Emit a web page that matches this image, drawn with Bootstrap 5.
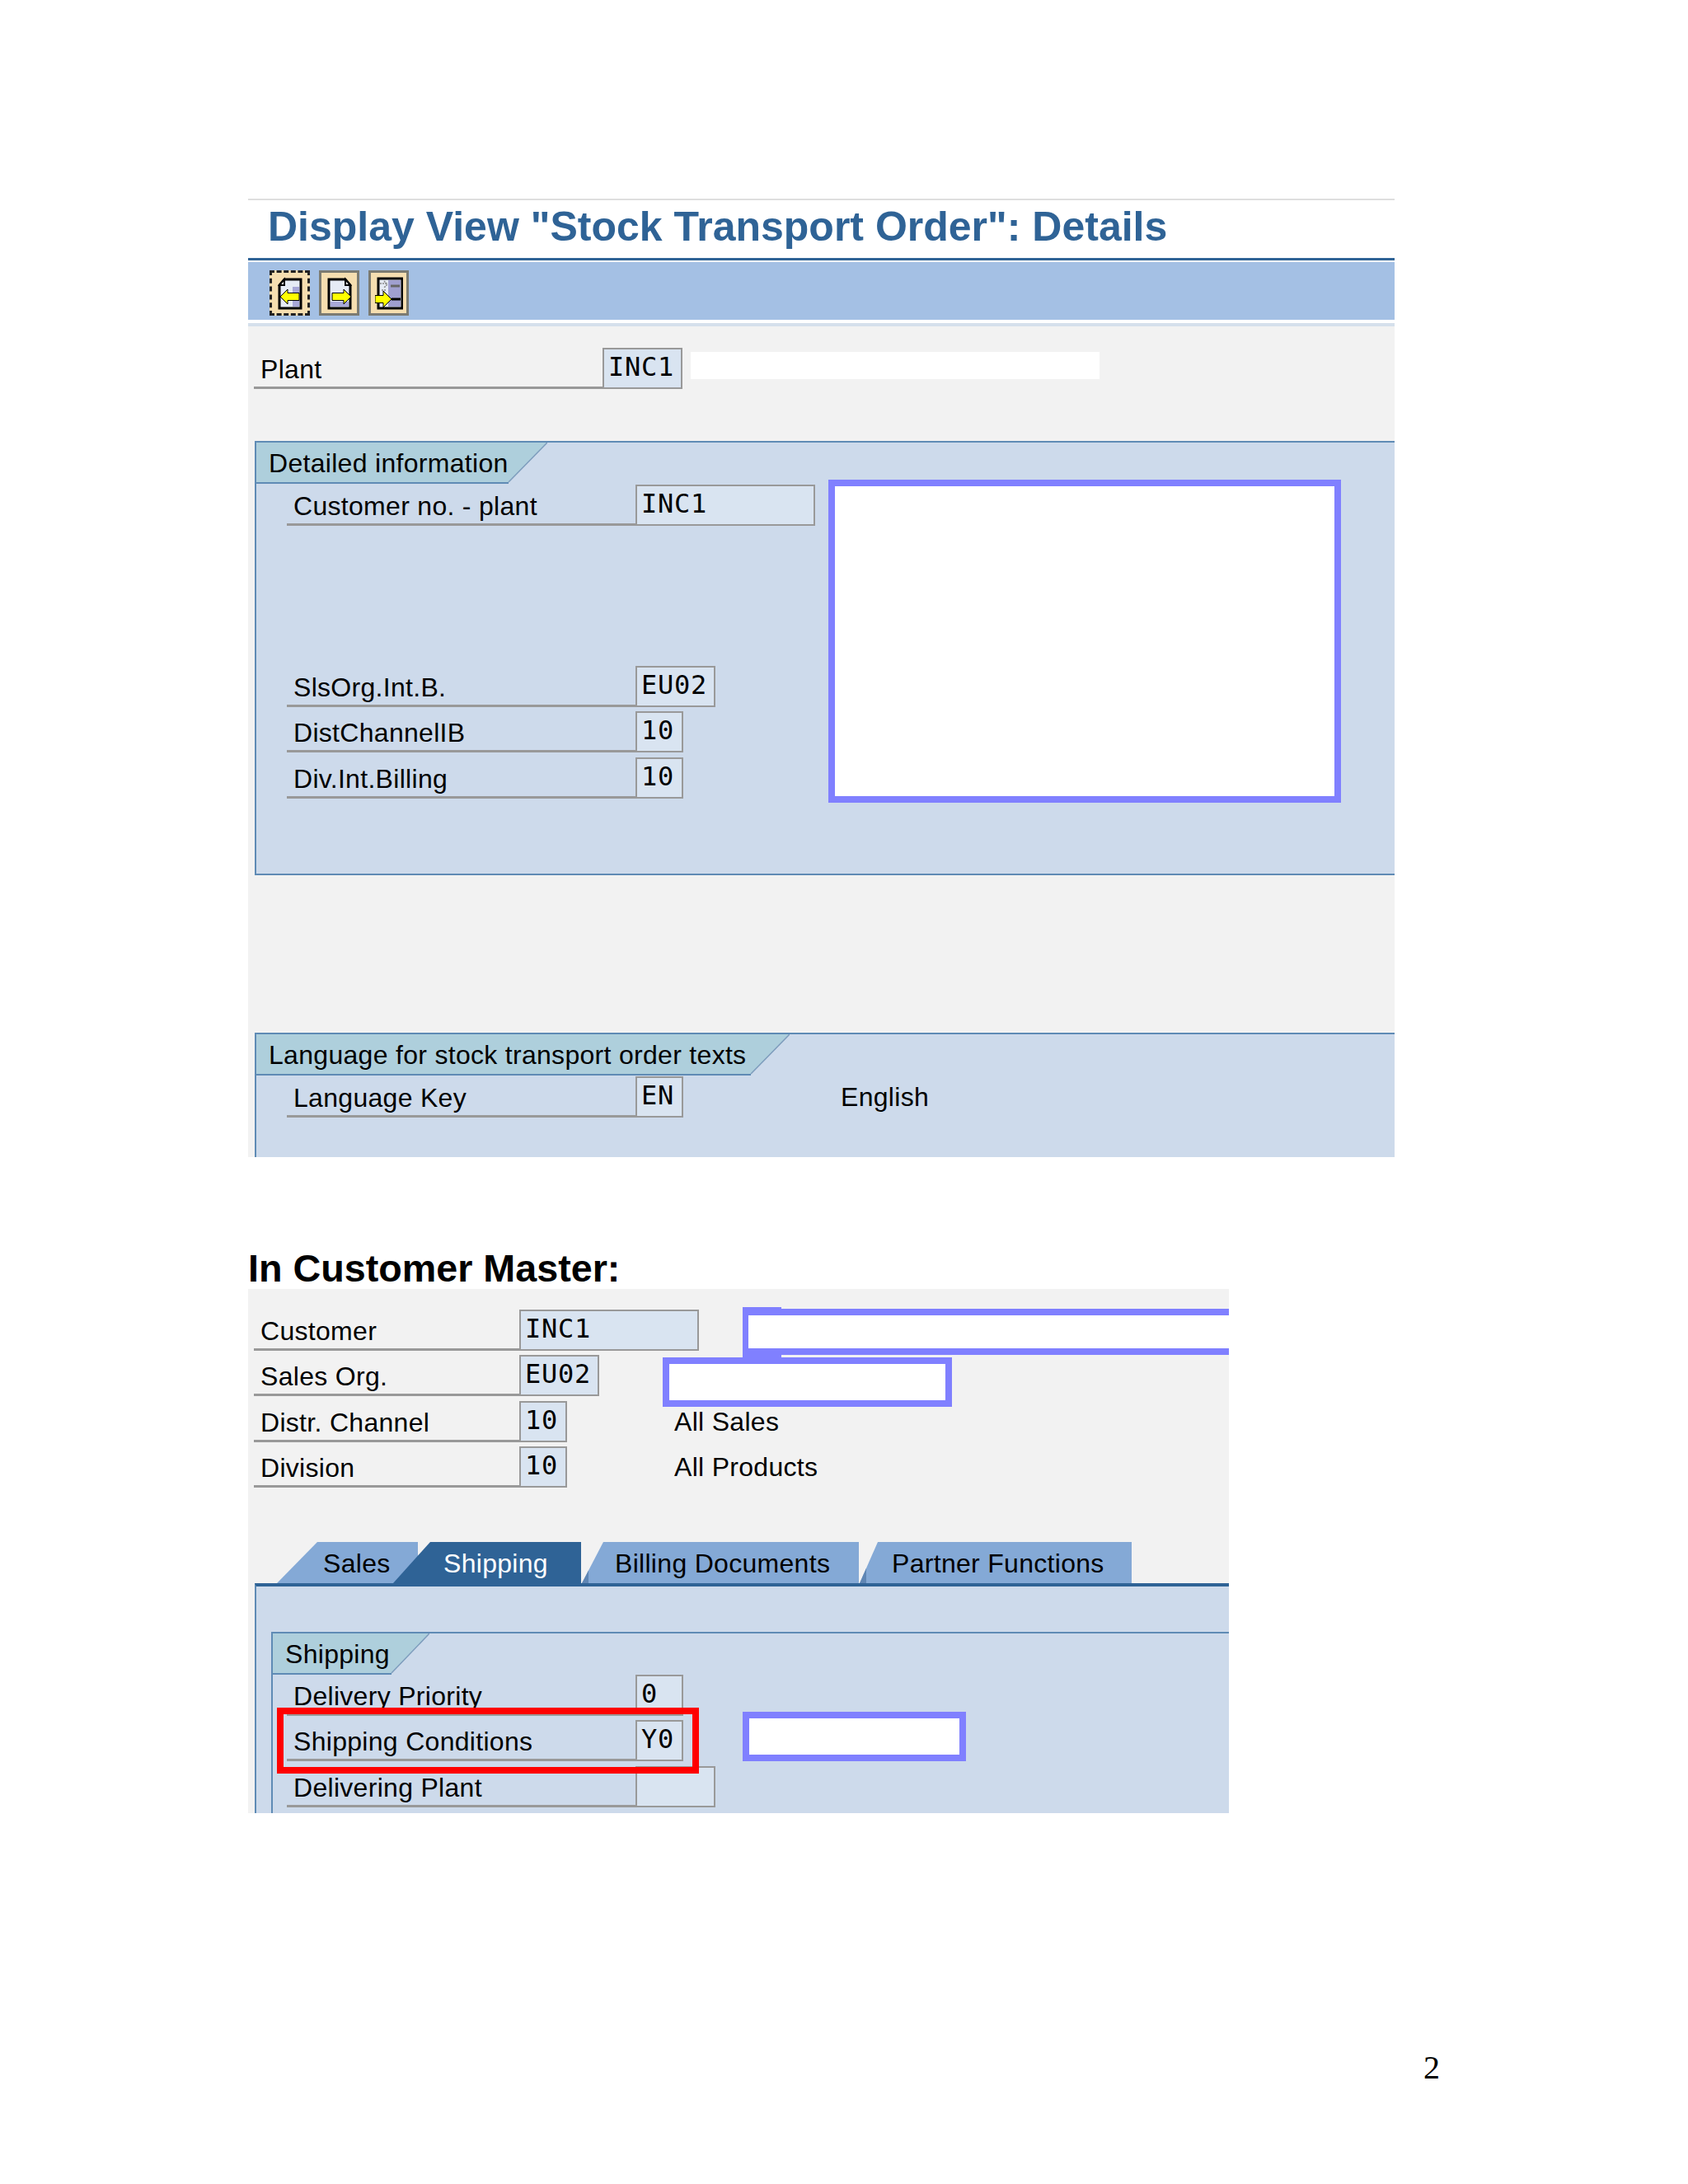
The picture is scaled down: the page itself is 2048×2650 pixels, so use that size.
<!DOCTYPE html>
<html lang="en">
<head>
<meta charset="utf-8">
<title>Stock Transport Order</title>
<link href="https://cdn.jsdelivr.net/npm/bootstrap@5.3.0/dist/css/bootstrap.min.css" rel="stylesheet">
<style>
body{background:#fff;font-family:"Liberation Sans",Arial,sans-serif;color:#000;margin:0;height:2650px;overflow:hidden}
.shot-a{position:relative;margin-left:301px;margin-top:241px;width:1391px;height:1163px;background:#f2f2f2;overflow:hidden}
.title-band{height:75px;background:#fff;border-top:2px solid #dedede;border-bottom:3px solid #2f6396;padding-left:24px;color:#2f6396;font-weight:700;font-size:50px;line-height:64px;white-space:nowrap}
.gap-band{height:2px;background:#fff}
.tool-band{height:70px;background:#a4c0e4;padding:10px 0 0 26px;gap:11px}
.tool-foot{height:8px;background:linear-gradient(#fff 0 50%,#d5e0ec 50%)}
.tbtn{width:49px;height:55px;background:#f5deb0;border:3px solid #7b7b72;display:flex;align-items:center;justify-content:center}
.tbtn-focus{outline:3px dashed #222;outline-offset:-3px;border-color:transparent}
.tbtn svg{width:34px;height:40px;display:block}
.sap-row{display:flex;height:50px;font-size:32px;line-height:40px}
.sap-row+.sap-row{margin-top:5.33px}
.lbl{flex:none;width:423px;border-bottom:3px solid #999;padding:6px 0 0 8px;white-space:nowrap;letter-spacing:.3px}
.lbl-short{width:322px}
.fld{flex:none;border:2px solid #999;background:#d9e4f1;font-family:"DejaVu Sans Mono",monospace;font-size:32px;line-height:38px;letter-spacing:.7px;padding:2px 0 0 5px;white-space:nowrap;overflow:hidden}
.w-s{width:58px}.w-m{width:97px}.w-l{width:218px}
.desc{white-space:nowrap;letter-spacing:.3px;padding-top:5px}
.plant-row{margin:26px 0 0 7px}
.plant-blank{flex:none;width:496px;height:33px;background:#fff;margin:5px 0 0 10px}
.grp{position:relative;margin-left:8px;background:#cddaeb;border-top:2px solid #5f8bb5;border-left:2px solid #5f8bb5}
.grp-a{margin-top:63px;height:527px;border-bottom:2px solid #5f8bb5}
.grp-b{margin-top:191px;height:151px}
.grp-c{margin:55px 0 0 18px;height:224px}
.grp-head{position:relative;height:50px;font-size:32px;line-height:42px;padding:4px 0 0 15px;white-space:nowrap;letter-spacing:.3px}
.grp-head svg{position:absolute;left:0;top:0;height:50px}
.grp-head span{position:relative}
.grp-rows{margin:1px 0 0 37px}
.grp-rows-c{margin:0 0 0 17px}
.spaced{margin-top:170px!important}
.english{margin-left:191px}
.red-out{position:absolute;background:#fff;border:8px solid #8080ff}
.out-a{left:704px;top:341px;width:622px;height:392px}
.shot-b{position:relative;margin-top:2px;margin-left:301px;width:1190px;height:636px;background:#f2f2f2;overflow:hidden}
.cust-head{margin:112px 0 0 301px;font-size:46.7px;line-height:46px;font-weight:700;white-space:nowrap}
.cust-rows{padding:25px 0 0 7px}
.all-txt{margin-left:130px}
.tabs{display:flex;margin:66px 0 0 35px;height:50px;font-size:32px;line-height:42px;letter-spacing:.3px;white-space:nowrap}
.stab{position:relative;background:#84a9d6;padding-top:5px}
.stab-1{width:171px;padding-left:56px;clip-path:polygon(49px 0,100% 0,100% 100%,0 100%)}
.stab-2{width:228px;margin-left:-30px;padding-left:61px;color:#fff;background:#2f6396;clip-path:polygon(45px 0,100% 0,100% 100%,0 100%)}
.stab-3{width:336px;margin-left:1px;padding-left:40px;clip-path:polygon(26px 0,100% 0,100% 100%,0 100%)}
.stab-4{width:330px;margin-left:1px;padding-left:39px;clip-path:polygon(22px 0,100% 0,100% 100%,0 100%)}
.stab-3::before,.stab-4::before{content:"";position:absolute;left:0;bottom:0;width:8px;height:20px;background:#5f86b4}
.tab-pane{margin-left:8px;height:279px;background:#cddaeb;border-top:4px solid #2f6396;border-left:2px solid #5f8bb5;overflow:hidden}
.out-b{left:600px;top:24px;width:640px;height:56px;border-width:8px 0 8px 7px}
.notch{position:absolute;left:600px;top:22px;width:47px;height:67px;background:#8080ff}
.out-c{left:503px;top:83px;width:351px;height:60px}
.out-d{left:600px;top:513px;width:271px;height:60px}
.red-box{position:absolute;left:35px;top:508px;width:512px;height:80px;border:8px solid #f00}
.page-no{margin:286px 0 0 1727px;font-family:"Liberation Serif","Times New Roman",serif;font-size:40px;line-height:46px}
</style>
</head>
<body>
<div class="shot-a">
  <div class="title-band">Display View "Stock Transport Order": Details</div>
  <div class="gap-band"></div>
  <div class="tool-band d-flex">
    <div class="tbtn tbtn-focus"><svg viewBox="0 0 34 40"><path d="M10 3H30V38H4V10Z" fill="#e6ebf5" stroke="#000" stroke-width="3"/><path d="M10 3V10H4Z" fill="#fff" stroke="#000" stroke-width="2"/><rect x="20" y="12" width="8" height="24" fill="#a8a8d8"/><path d="M5 24 14 15V19.500H28V28.500H14V33Z" fill="#ff0" stroke="#000" stroke-width="1"/></svg></div>
    <div class="tbtn"><svg viewBox="0 0 34 40"><path d="M4 3H24L30 10V38H4Z" fill="#e6ebf5" stroke="#000" stroke-width="3"/><path d="M24 3V10H30Z" fill="#fff" stroke="#000" stroke-width="2"/><rect x="6" y="30" width="22" height="6" fill="#a8a8d8"/><path d="M31 24 22 15V19.500H8V28.500H22V33Z" fill="#ff0" stroke="#000" stroke-width="1"/></svg></div>
    <div class="tbtn"><svg viewBox="0 0 34 40"><rect x="4" y="2" width="29" height="36" fill="#e6ebf5" stroke="#000" stroke-width="3"/><rect x="16" y="4" width="15" height="32" fill="#a0a0d0"/><path d="M19 11H30" stroke="#666" stroke-width="3"/><path d="M20 27H31" stroke="#000" stroke-width="3"/><path d="M6 8H14M11 5 15 9 11 13M8 16H13" fill="none" stroke="#888" stroke-width="1.5" stroke-dasharray="2 1"/><path d="M0 22.500H10V17L20 27 10 37V31.500H0Z" fill="#ff0" stroke="#000" stroke-width="1"/></svg></div>
  </div>
  <div class="tool-foot"></div>
  <div class="sap-row plant-row">
    <div class="lbl">Plant</div>
    <div class="fld w-m">INC1</div>
    <div class="plant-blank"></div>
  </div>
  <div class="grp grp-a">
    <div class="grp-head"><svg width="353" height="50" viewBox="0 0 353 50"><path d="M0 0H353L306 48H0Z" fill="#aecfdc"/><path d="M353 0 306 48" stroke="#7d9cbc" stroke-width="1.5"/><path d="M0 49H306" stroke="#5f8bb5" stroke-width="2"/></svg><span>Detailed information</span></div>
    <div class="grp-rows">
      <div class="sap-row"><div class="lbl">Customer no. - plant</div><div class="fld w-l">INC1</div></div>
      <div class="sap-row spaced"><div class="lbl">SlsOrg.Int.B.</div><div class="fld w-m">EU02</div></div>
      <div class="sap-row"><div class="lbl">DistChannelIB</div><div class="fld w-s">10</div></div>
      <div class="sap-row"><div class="lbl">Div.Int.Billing</div><div class="fld w-s">10</div></div>
    </div>
  </div>
  <div class="grp grp-b">
    <div class="grp-head"><svg width="647" height="50" viewBox="0 0 647 50"><path d="M0 0H647L600 48H0Z" fill="#aecfdc"/><path d="M647 0 600 48" stroke="#7d9cbc" stroke-width="1.5"/><path d="M0 49H600" stroke="#5f8bb5" stroke-width="2"/></svg><span>Language for stock transport order texts</span></div>
    <div class="grp-rows">
      <div class="sap-row"><div class="lbl">Language Key</div><div class="fld w-s">EN</div><div class="desc english">English</div></div>
    </div>
  </div>
  <div class="red-out out-a"></div>
</div>
<div class="cust-head">In Customer Master:</div>
<div class="shot-b">
  <div class="cust-rows">
    <div class="sap-row"><div class="lbl lbl-short">Customer</div><div class="fld w-l">INC1</div></div>
    <div class="sap-row"><div class="lbl lbl-short">Sales Org.</div><div class="fld w-m">EU02</div></div>
    <div class="sap-row"><div class="lbl lbl-short">Distr. Channel</div><div class="fld w-s">10</div><div class="desc all-txt">All Sales</div></div>
    <div class="sap-row"><div class="lbl lbl-short">Division</div><div class="fld w-s">10</div><div class="desc all-txt">All Products</div></div>
  </div>
  <div class="tabs">
    <div class="stab stab-1">Sales</div>
    <div class="stab stab-2">Shipping</div>
    <div class="stab stab-3">Billing Documents</div>
    <div class="stab stab-4">Partner Functions</div>
  </div>
  <div class="tab-pane">
    <div class="grp grp-c">
      <div class="grp-head"><svg width="190" height="50" viewBox="0 0 190 50"><path d="M0 0H190L144 48H0Z" fill="#aecfdc"/><path d="M190 0 144 48" stroke="#7d9cbc" stroke-width="1.5"/><path d="M0 49H144" stroke="#5f8bb5" stroke-width="2"/></svg><span>Shipping</span></div>
      <div class="grp-rows-c">
        <div class="sap-row"><div class="lbl">Delivery Priority</div><div class="fld w-s">0</div></div>
        <div class="sap-row"><div class="lbl">Shipping Conditions</div><div class="fld w-s">Y0</div></div>
        <div class="sap-row"><div class="lbl">Delivering Plant</div><div class="fld w-m"></div></div>
      </div>
    </div>
  </div>
  <div class="notch"></div>
  <div class="red-out out-b"></div>
  <div class="red-out out-c"></div>
  <div class="red-out out-d"></div>
  <div class="red-box"></div>
</div>
<div class="page-no">2</div>
<script src="https://cdn.jsdelivr.net/npm/bootstrap@5.3.0/dist/js/bootstrap.bundle.min.js"></script>
</body>
</html>
